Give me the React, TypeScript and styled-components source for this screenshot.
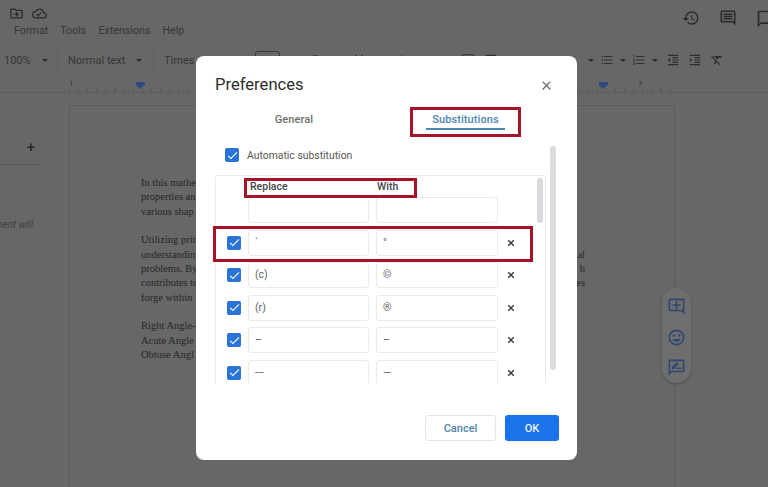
import styled, { createGlobalStyle } from 'styled-components';
import {
  MdCheck,
  MdClose,
  MdFormatBold,
  MdFormatClear,
  MdFormatIndentDecrease,
  MdFormatIndentIncrease,
  MdFormatListBulleted,
  MdFormatListNumbered,
  MdFormatUnderlined,
  MdHistory,
  MdInsertLink,
  MdOutlineAddComment,
  MdOutlineChatBubbleOutline,
  MdOutlineCloudDone,
  MdOutlineComment,
  MdOutlineDriveFileMove,
  MdOutlineImage,
  MdOutlineInsertEmoticon,
  MdOutlineRateReview,
  MdTextFormat,
} from 'react-icons/md';

const GlobalStyle = createGlobalStyle`
  html, body {
    margin: 0;
    padding: 0;
    background: #676767;
  }
  * {
    box-sizing: border-box;
  }
`;

const menuItems = ['Format', 'Tools', 'Extensions', 'Help'];

const paragraphs = [
  [
    { text: 'In this mathe', tail: '' },
    { text: 'properties an', tail: '' },
    { text: 'various shap', tail: '' },
  ],
  [
    { text: 'Utilizing prin', tail: '' },
    { text: 'understandin', tail: 'al' },
    { text: 'problems. By', tail: 'h' },
    { text: 'contributes to', tail: 'es' },
    { text: 'forge within', tail: '' },
  ],
  [
    { text: 'Right Angle-', tail: '' },
    { text: 'Acute Angle', tail: '' },
    { text: 'Obtuse Angl', tail: '' },
  ],
];

const substitutions = [
  { replace: '`', by: '°' },
  { replace: '(c)', by: '©' },
  { replace: '(r)', by: '®' },
  { replace: '–', by: '–' },
  { replace: '---', by: '—' },
];

export default function App() {
  return (
    <Screen>
      <GlobalStyle />
      <Header>
        <TitleBlock>
          <TitleIcons>
            <MdOutlineDriveFileMove size={15} />
            <MdOutlineCloudDone size={15} />
          </TitleIcons>
          <Menu>
            {menuItems.map((item) => (
              <span key={item}>{item}</span>
            ))}
          </Menu>
        </TitleBlock>
        <HeaderActions>
          <MdHistory size={18} />
          <MdOutlineComment size={18} />
          <MdOutlineChatBubbleOutline size={20} />
        </HeaderActions>
      </Header>

      <Toolbar>
        <Combo $width={53}>
          100%
          <Caret />
        </Combo>
        <ToolDivider />
        <Combo $width={85}>
          Normal text
          <Caret />
        </Combo>
        <ToolDivider />
        <Combo $width={90}>Times</Combo>
        <SizeBox />
        <HiddenTools $gap={29}>
          <MdFormatBold size={14} />
          <MdFormatUnderlined size={14} />
          <MdTextFormat size={14} />
        </HiddenTools>
        <HiddenTools $gap={9}>
          <MdInsertLink size={14} />
          <MdOutlineComment size={14} />
          <MdOutlineImage size={14} />
        </HiddenTools>
        <ToolbarRight>
          <Caret />
          <MdFormatListBulleted size={14} />
          <Caret />
          <MdFormatListNumbered size={14} />
          <Caret />
          <MdFormatIndentDecrease size={14} />
          <MdFormatIndentIncrease size={14} />
          <MdFormatClear size={14} />
        </ToolbarRight>
      </Toolbar>

      <Ruler>
        <RulerTrack>
          <RulerNumber $left={0}>1</RulerNumber>
          <RulerMarker $left={67} />
          <RulerMarker $left={530} />
          <RulerNumber $left={569}>7</RulerNumber>
        </RulerTrack>
      </Ruler>

      <Workspace>
        <Outline>
          <OutlineHead>
            <span>+</span>
          </OutlineHead>
          <OutlineNote>ment will</OutlineNote>
        </Outline>
        <Sheet>
          {paragraphs.map((lines, i) => (
            <Paragraph key={i}>
              {lines.map((line) => (
                <Line key={line.text}>
                  <span>{line.text}</span>
                  <span>{line.tail}</span>
                </Line>
              ))}
            </Paragraph>
          ))}
        </Sheet>
      </Workspace>

      <FloatingPill>
        <MdOutlineAddComment size={19} />
        <MdOutlineInsertEmoticon size={19} />
        <MdOutlineRateReview size={19} />
      </FloatingPill>

      <Dialog>
        <DialogHead>
          <DialogTitle>Preferences</DialogTitle>
          <CloseButton>
            <MdClose size={15} />
          </CloseButton>
        </DialogHead>

        <Tabs>
          <Tab>General</Tab>
          <Tab $active>Substitutions</Tab>
        </Tabs>

        <DialogBody>
          <Scroller>
            <AutoRow>
              <CheckBox>
                <MdCheck size={13} />
              </CheckBox>
              Automatic substitution
            </AutoRow>
            <TableFrame>
              <HeaderRow>
                <span />
                <span>Replace</span>
                <span>With</span>
              </HeaderRow>
              <Row>
                <span />
                <Field />
                <Field />
                <span />
              </Row>
              {substitutions.map((s) => (
                <Row key={s.replace}>
                  <CheckBox>
                    <MdCheck size={13} />
                  </CheckBox>
                  <Field>{s.replace}</Field>
                  <Field>{s.by}</Field>
                  <RemoveMark>
                    <svg width="8" height="8" viewBox="0 0 8 8">
                      <path d="M1.2 1.2l5.6 5.6M6.8 1.2L1.2 6.8" stroke="currentColor" strokeWidth="1.5" />
                    </svg>
                  </RemoveMark>
                </Row>
              ))}
              <InnerThumb />
            </TableFrame>
          </Scroller>
          <OuterThumb />
        </DialogBody>

        <DialogFoot>
          <CancelButton>Cancel</CancelButton>
          <OkButton>OK</OkButton>
        </DialogFoot>

        <Callout $left={214} $top={51} $width={111} $height={30} />
        <Callout $left={48} $top={122} $width={173} $height={20} />
        <Callout $left={17} $top={170} $width={320} $height={36} />
      </Dialog>
    </Screen>
  );
}

const Screen = styled.div`
  position: relative;
  width: 768px;
  height: 487px;
  overflow: hidden;
  display: flex;
  flex-direction: column;
  background: #676767;
  font-family: Roboto, 'Liberation Sans', sans-serif;
  color: #2e2e2e;
`;

const Header = styled.header`
  height: 44px;
  flex: none;
  display: flex;
  justify-content: space-between;
  padding-left: 9px;
`;

const TitleBlock = styled.div`
  display: flex;
  flex-direction: column;
`;

const TitleIcons = styled.div`
  height: 23px;
  padding-top: 6px;
  display: flex;
  gap: 8px;
  color: #2b2b2b;
`;

const Menu = styled.nav`
  margin-left: 5px;
  display: flex;
  gap: 12px;
  font-size: 10.7px;
  line-height: 16px;
  color: #363636;
`;

const HeaderActions = styled.div`
  display: flex;
  gap: 19px;
  padding: 9px 0 0;
  margin-right: -8px;
  color: #2a2a2a;
`;

const Toolbar = styled.div`
  height: 32px;
  flex: none;
  display: flex;
  align-items: center;
  padding-left: 4px;
  font-size: 11px;
  color: #363636;
`;

const Combo = styled.div<{ $width: number }>`
  width: ${(p) => p.$width}px;
  display: flex;
  align-items: center;
  gap: 11px;
`;

const Caret = styled.i`
  width: 0;
  height: 0;
  flex: none;
  border: 3px solid transparent;
  border-top: 3px solid #2e2e2e;
  border-bottom: 0;
`;

const ToolDivider = styled.div`
  width: 1px;
  height: 18px;
  margin-right: 10px;
  background: #5e5e5e;
`;

const SizeBox = styled.div`
  width: 25px;
  height: 20px;
  margin: 2px 0 0 1px;
  border: 1px solid #383838;
  border-radius: 3px;
`;

const HiddenTools = styled.div<{ $gap: number }>`
  display: flex;
  align-items: center;
  gap: ${(p) => p.$gap}px;
  margin-left: 29px;
  color: #333;
`;

const ToolbarRight = styled.div`
  margin-left: auto;
  margin-right: 44px;
  display: flex;
  align-items: center;
  gap: 6px;
  color: #2e2e2e;
  svg:nth-last-child(-n + 3) {
    margin-left: 2px;
  }
`;

const Ruler = styled.div`
  height: 16px;
  flex: none;
  margin-top: 1px;
  border-bottom: 1px solid #5d5d5d;
  padding-left: 69px;
`;

const RulerTrack = styled.div`
  position: relative;
  width: 606px;
  height: 15px;
  background-image: repeating-linear-gradient(90deg, #565656 0 1px, transparent 1px 9.1px);
  background-size: 100% 3px;
  background-position: bottom;
  background-repeat: no-repeat;
`;

const RulerNumber = styled.span<{ $left: number }>`
  position: absolute;
  left: ${(p) => p.$left}px;
  top: 2px;
  font-size: 8px;
  line-height: 10px;
  color: #333;
`;

const RulerMarker = styled.i<{ $left: number }>`
  position: absolute;
  left: ${(p) => p.$left}px;
  top: 5px;
  width: 9px;
  height: 3px;
  background: #2b4a7f;
  &::after {
    content: '';
    position: absolute;
    left: 0;
    top: 3px;
    border: 4.5px solid transparent;
    border-top: 4px solid #2b4a7f;
    border-bottom: 0;
  }
`;

const Workspace = styled.main`
  flex: 1;
  display: flex;
  padding-top: 12px;
  min-height: 0;
`;

const Outline = styled.aside`
  width: 69px;
  flex: none;
  padding-top: 32px;
`;

const OutlineHead = styled.div`
  width: 42px;
  height: 28px;
  border-bottom: 1px solid #5a5a5a;
  text-align: right;
  padding-right: 7px;
  font-size: 15px;
  line-height: 20px;
  font-weight: 500;
  color: #2b2b2b;
`;

const OutlineNote = styled.div`
  margin: 53px 0 0 -6px;
  font-size: 10px;
  font-style: italic;
  line-height: 14px;
  color: #3f3f3f;
`;

const Sheet = styled.section`
  width: 606px;
  flex: none;
  border: 1px solid #5c5c5c;
  border-bottom: 0;
  padding: 70px 0 0 71px;
`;

const Paragraph = styled.div`
  width: 444px;
  margin-bottom: 14px;
  font-family: 'Liberation Serif', serif;
  font-size: 10.5px;
  line-height: 14.4px;
  color: #262626;
`;

const Line = styled.div`
  display: flex;
  justify-content: space-between;
`;

const FloatingPill = styled.div`
  position: absolute;
  left: 662px;
  top: 288px;
  width: 29px;
  height: 95px;
  border-radius: 15px;
  background: #6e6e6e;
  box-shadow: 0 1px 3px rgba(0, 0, 0, 0.25);
  display: flex;
  flex-direction: column;
  align-items: center;
  justify-content: space-between;
  padding: 9px 0 6px;
  color: #2d4672;
`;

const Dialog = styled.div`
  position: absolute;
  left: 196px;
  top: 56px;
  width: 381px;
  height: 404px;
  background: #fff;
  border-radius: 8px;
  display: flex;
  flex-direction: column;
`;

const DialogHead = styled.div`
  height: 41px;
  flex: none;
  display: flex;
  align-items: flex-end;
  justify-content: space-between;
  padding: 0 23px 0 19px;
`;

const DialogTitle = styled.h2`
  margin: 0;
  font-size: 16.6px;
  font-weight: 400;
  line-height: 24px;
  color: #2f2f2f;
`;

const CloseButton = styled.span`
  height: 24px;
  display: flex;
  align-items: center;
  color: #6f6f6f;
`;

const Tabs = styled.div`
  height: 31px;
  flex: none;
  margin-top: 3px;
  display: grid;
  grid-template-columns: 120px 79px;
  column-gap: 72px;
  padding-left: 38px;
`;

const Tab = styled.div<{ $active?: boolean }>`
  text-align: center;
  padding-top: 13px;
  font-size: 11px;
  line-height: 14px;
  font-weight: 500;
  letter-spacing: 0.1px;
  white-space: nowrap;
  color: ${(p) => (p.$active ? '#4b86b4' : '#6f6f6f')};
  border-bottom: 2px solid ${(p) => (p.$active ? '#4f86ad' : 'transparent')};
  height: 30px;
`;

const DialogBody = styled.div`
  flex: none;
  height: 240px;
  margin-top: 15px;
  padding: 0 21px 0 19px;
  display: flex;
  justify-content: space-between;
`;

const Scroller = styled.div`
  width: 331px;
  display: flex;
  flex-direction: column;
`;

const AutoRow = styled.label`
  height: 18px;
  margin-bottom: 11px;
  padding-left: 10px;
  display: flex;
  align-items: center;
  gap: 8px;
  font-size: 10.4px;
  color: #565656;
`;

const CheckBox = styled.span`
  width: 14px;
  height: 14px;
  flex: none;
  border-radius: 2px;
  background: #2a73d9;
  color: #fff;
  display: flex;
  align-items: center;
  justify-content: center;
`;

const TableFrame = styled.div`
  position: relative;
  height: 210px;
  overflow: hidden;
  border: 1px solid #e8eaed;
  border-bottom: 0;
  border-radius: 3px 3px 0 0;
`;

const HeaderRow = styled.div`
  display: grid;
  grid-template-columns: 34px 127px 1fr;
  height: 21px;
  align-items: center;
  font-size: 10.5px;
  font-weight: 500;
  color: #444;
`;

const Row = styled.div`
  display: grid;
  grid-template-columns: 11px 14px 7px 121px 7px 122px 6px 14px;
  grid-template-areas: '. c . r . w . x';
  align-items: center;
  height: 32.5px;
  padding-bottom: 6.5px;
  & > :nth-child(1) {
    grid-area: c;
  }
  & > :nth-child(2) {
    grid-area: r;
  }
  & > :nth-child(3) {
    grid-area: w;
  }
  & > :nth-child(4) {
    grid-area: x;
  }
`;

const Field = styled.div`
  height: 26px;
  border: 1px solid #e8eaed;
  border-radius: 3px;
  padding-left: 6px;
  font-size: 10.5px;
  line-height: 24px;
  color: #5f5f5f;
`;

const RemoveMark = styled.span`
  display: flex;
  align-items: center;
  justify-content: center;
  color: #3c3c3c;
`;

const InnerThumb = styled.i`
  position: absolute;
  right: 2px;
  top: 2px;
  width: 6px;
  height: 45px;
  border-radius: 3px;
  background: #d8dadd;
`;

const OuterThumb = styled.i`
  width: 6px;
  height: 224px;
  border-radius: 3px;
  background: #dadce0;
`;

const DialogFoot = styled.div`
  margin-top: 29px;
  padding-right: 18px;
  display: flex;
  justify-content: flex-end;
  gap: 9px;
`;

const CancelButton = styled.button`
  width: 71px;
  height: 26px;
  padding: 0;
  background: #fff;
  border: 1px solid #e3e6ea;
  border-radius: 3px;
  font: 500 11px Roboto, sans-serif;
  color: #4f86ad;
`;

const OkButton = styled.button`
  width: 54px;
  height: 26px;
  padding: 0;
  background: #1a73e8;
  border: 0;
  border-radius: 3px;
  font: 500 11px Roboto, sans-serif;
  color: #e8f0fb;
`;

const Callout = styled.div<{ $left: number; $top: number; $width: number; $height: number }>`
  position: absolute;
  left: ${(p) => p.$left}px;
  top: ${(p) => p.$top}px;
  width: ${(p) => p.$width}px;
  height: ${(p) => p.$height}px;
  border: 3px solid #a4152a;
  pointer-events: none;
`;
